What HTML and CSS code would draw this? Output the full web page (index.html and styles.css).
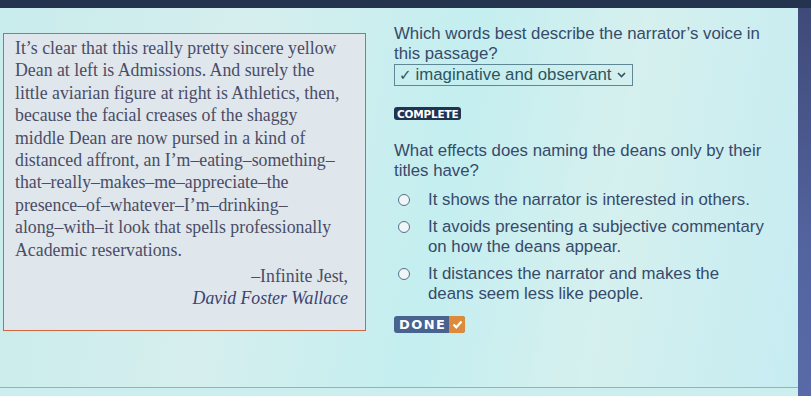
FILE: index.html
```html
<!DOCTYPE html>
<html>
<head>
  <meta charset="utf-8">
  <title>Reading Check</title>
  <link rel="stylesheet" href="styles.css">
</head>
<body>
  <div class="topbar"></div>
  <div class="screen">
    <div class="page">
      <div class="passage-col">
        <div class="passage">
          <p class="quote">It’s clear that this really pretty sincere yellow<br>
            Dean at left is Admissions. And surely the<br>
            little aviarian figure at right is Athletics, then,<br>
            because the facial creases of the shaggy<br>
            middle Dean are now pursed in a kind of<br>
            distanced affront, an I’m–eating–something–<br>
            that–really–makes–me–appreciate–the<br>
            presence–of–whatever–I’m–drinking–<br>
            along–with–it look that spells professionally<br>
            Academic reservations.</p>
          <p class="source">–Infinite Jest,<br><em>David Foster Wallace</em></p>
        </div>
      </div>

      <div class="questions">
        <div class="question">
          <p class="prompt">Which words best describe the narrator’s voice in this passage?</p>
          <div class="select">
            <span class="tick">✓</span> imaginative and observant
            <svg class="caret" width="9" height="6" viewBox="0 0 9 6"><path d="M1 1l3.5 3.5L8 1" fill="none" stroke="currentColor" stroke-width="1.6"/></svg>
          </div>
          <span class="badge complete">COMPLETE</span>
        </div>

        <div class="question second">
          <p class="prompt">What effects does naming the deans only by their titles have?</p>
          <ul class="options">
            <li><span class="radio"></span><span>It shows the narrator is interested in others.</span></li>
            <li><span class="radio"></span><span>It avoids presenting a subjective commentary on how the deans appear.</span></li>
            <li><span class="radio"></span><span>It distances the narrator and makes the deans seem less like people.</span></li>
          </ul>
          <span class="badge done">DONE<span class="check"><svg width="11" height="9" viewBox="0 0 11 9"><path d="M1.5 4.5l2.8 2.8L9.5 1.5" fill="none" stroke="#fff" stroke-width="2.2"/></svg></span></span>
        </div>
      </div>
    </div>
    <div class="edge"></div>
  </div>
</body>
</html>
```

FILE: styles.css
```css
body {
  margin: 0;
  background: #cdeeee;
  overflow: hidden;
}
.topbar {
  height: 8px;
  background: #24344f;
}
.screen {
  display: flex;
  height: 388px;
}
.page {
  flex: 1;
  display: flex;
  background: linear-gradient(100deg, #c9ecec 0%, #d6eeee 30%, #c4eef0 55%, #d5f0ee 75%, #c6ecf2 100%);
  border-bottom: 1px solid #8fb2c4;
  height: 379px;
}
.edge {
  width: 13px;
  background: linear-gradient(180deg, #3e4a78 0%, #53639e 60%, #5a6aa8 100%);
}
.passage-col {
  width: 366px;
  padding: 25px 0 0 3px;
  box-sizing: border-box;
}
.passage {
  border: 1px solid #d0673c;
  background: #dfe6ec;
  padding: 3px 17px 20px 11px;
  color: #4a4d66;
  font-family: "Liberation Serif", "Times New Roman", serif;
  font-size: 17.8px;
  line-height: 22.4px;
  white-space: nowrap;
}
.quote {
  margin: 0;
}
.source {
  margin: 4px 0 0;
  text-align: right;
}
.source em {
  color: #3a4370;
}
.questions {
  flex: 1;
  padding: 16px 0 0 28px;
  font-family: "Liberation Sans", Arial, sans-serif;
  font-size: 16.8px;
  line-height: 20px;
  color: #364a6a;
}
.question p {
  margin: 0;
}
.prompt {
  width: 380px;
}
.select {
  display: inline-flex;
  align-items: center;
  gap: 4px;
  margin-top: 0;
  padding: 0 6px 0 4px;
  height: 20px;
  border: 1px solid #5f8796;
  color: #2b5560;
}
.tick {
  font-family: "DejaVu Sans", sans-serif;
  font-size: 15px;
}
.caret {
  color: #2b5560;
  margin-left: 2px;
}
.badge {
  display: inline-flex;
  align-items: center;
  font-family: "DejaVu Sans", sans-serif;
  font-weight: bold;
  color: #fff;
  border-radius: 3px;
}
.complete {
  display: flex;
  width: fit-content;
  margin-top: 21px;
  padding: 0 3px;
  height: 13px;
  font-size: 10.5px;
  letter-spacing: -0.2px;
  background: #1f3450;
}
.second {
  margin-top: 21px;
}
.options {
  list-style: none;
  margin: 9px 0 0;
  padding: 0 0 0 4px;
}
.options li {
  display: flex;
  gap: 18px;
  margin-bottom: 7px;
}
.radio {
  flex: none;
  width: 10px;
  height: 10px;
  margin-top: 4px;
  border: 1.5px solid #5a6f8a;
  border-radius: 50%;
  background: #eef6f8;
}
.options li span:last-child {
  width: 339px;
}
.done {
  margin-top: 5px;
  height: 17px;
  padding-left: 5px;
  font-size: 13px;
  letter-spacing: 1.4px;
  background: #48638e;
  overflow: hidden;
}
.check {
  display: flex;
  align-items: center;
  justify-content: center;
  width: 16px;
  height: 17px;
  margin-left: 3px;
  background: #dd8a3a;
}
```
